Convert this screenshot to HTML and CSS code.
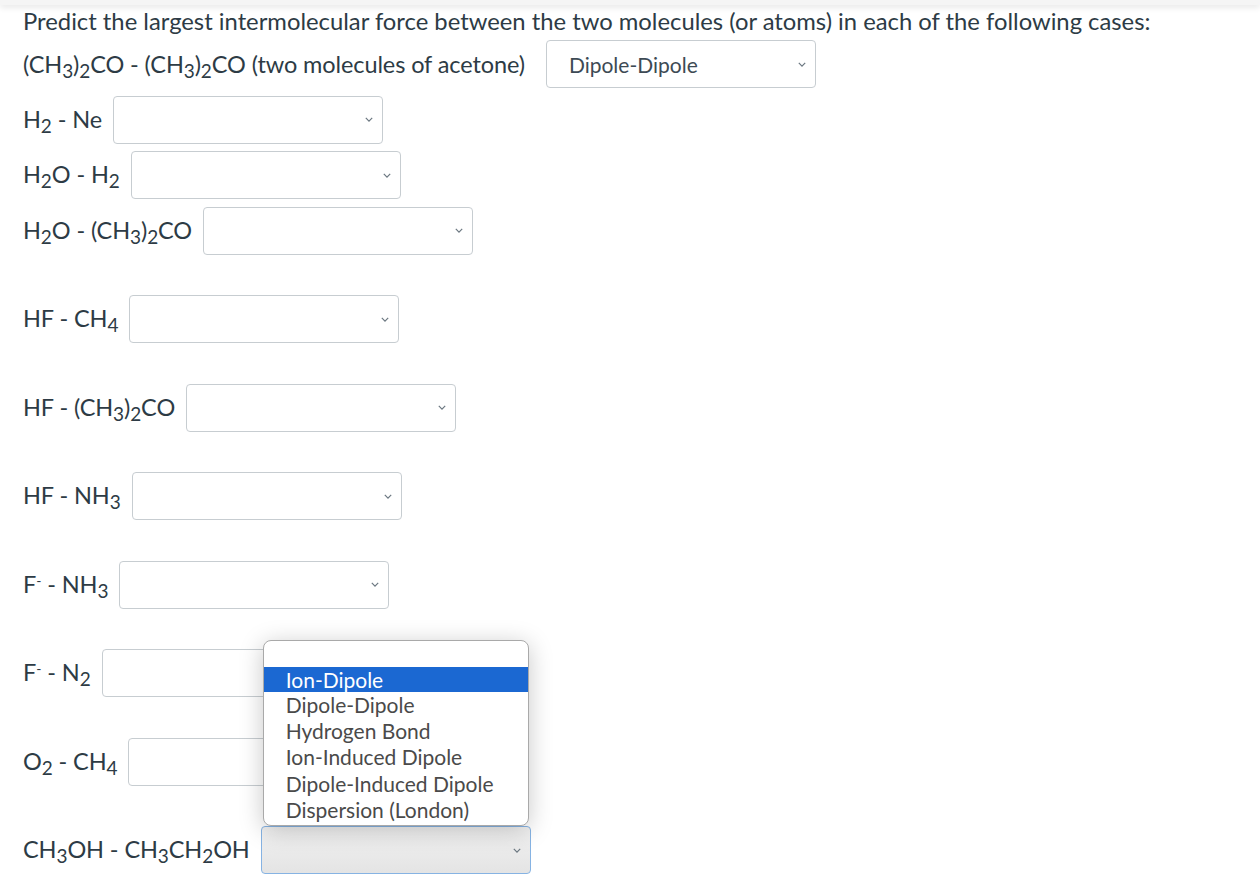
FILE: index.html
```html
<!DOCTYPE html>
<html>
<head>
<meta charset="utf-8">
<link rel="stylesheet" href="styles.css">
</head>
<body>
<div class="topbar"></div>
<div class="quiz">
  <p class="intro">Predict the largest intermolecular force between the two molecules (or atoms) in each of the following cases:</p>

  <div class="row first">
    <span class="label">(CH<sub>3</sub>)<sub>2</sub>CO - (CH<sub>3</sub>)<sub>2</sub>CO (two molecules of acetone)</span>
    <div class="select"><span class="value">Dipole-Dipole</span><svg class="chev" viewBox="0 0 10 6"><path d="M1 1 L5 5 L9 1" /></svg></div>
  </div>

  <div class="row">
    <span class="label">H<sub>2</sub> - Ne</span>
    <div class="select"><span class="value"></span><svg class="chev" viewBox="0 0 10 6"><path d="M1 1 L5 5 L9 1" /></svg></div>
  </div>

  <div class="row">
    <span class="label">H<sub>2</sub>O - H<sub>2</sub></span>
    <div class="select"><span class="value"></span><svg class="chev" viewBox="0 0 10 6"><path d="M1 1 L5 5 L9 1" /></svg></div>
  </div>

  <div class="row">
    <span class="label">H<sub>2</sub>O - (CH<sub>3</sub>)<sub>2</sub>CO</span>
    <div class="select"><span class="value"></span><svg class="chev" viewBox="0 0 10 6"><path d="M1 1 L5 5 L9 1" /></svg></div>
  </div>

  <div class="row spaced">
    <span class="label">HF - CH<sub>4</sub></span>
    <div class="select"><span class="value"></span><svg class="chev" viewBox="0 0 10 6"><path d="M1 1 L5 5 L9 1" /></svg></div>
  </div>

  <div class="row spaced">
    <span class="label">HF - (CH<sub>3</sub>)<sub>2</sub>CO</span>
    <div class="select"><span class="value"></span><svg class="chev" viewBox="0 0 10 6"><path d="M1 1 L5 5 L9 1" /></svg></div>
  </div>

  <div class="row spaced">
    <span class="label">HF - NH<sub>3</sub></span>
    <div class="select"><span class="value"></span><svg class="chev" viewBox="0 0 10 6"><path d="M1 1 L5 5 L9 1" /></svg></div>
  </div>

  <div class="row spaced">
    <span class="label">F<sup>-</sup> - NH<sub>3</sub></span>
    <div class="select"><span class="value"></span><svg class="chev" viewBox="0 0 10 6"><path d="M1 1 L5 5 L9 1" /></svg></div>
  </div>

  <div class="row spaced">
    <span class="label">F<sup>-</sup> - N<sub>2</sub></span>
    <div class="select"><span class="value"></span><svg class="chev" viewBox="0 0 10 6"><path d="M1 1 L5 5 L9 1" /></svg></div>
  </div>

  <div class="row spaced">
    <span class="label">O<sub>2</sub> - CH<sub>4</sub></span>
    <div class="select"><span class="value"></span><svg class="chev" viewBox="0 0 10 6"><path d="M1 1 L5 5 L9 1" /></svg></div>
  </div>

  <div class="row spaced">
    <span class="label">CH<sub>3</sub>OH - CH<sub>3</sub>CH<sub>2</sub>OH</span>
    <div class="select active"><span class="value"></span><svg class="chev" viewBox="0 0 10 6"><path d="M1 1 L5 5 L9 1" /></svg>
      <ul class="dropdown">
        <li class="opt blank"></li>
        <li class="opt hl">Ion-Dipole</li>
        <li class="opt">Dipole-Dipole</li>
        <li class="opt">Hydrogen Bond</li>
        <li class="opt">Ion-Induced Dipole</li>
        <li class="opt">Dipole-Induced Dipole</li>
        <li class="opt">Dispersion (London)</li>
      </ul>
    </div>
  </div>
</div>
</body>
</html>
```
FILE: styles.css
```css
html, body {
  margin: 0;
  padding: 0;
  background: #ffffff;
}
body {
  font-family: Lato, "Open Sans", sans-serif;
  color: #2d3b45;
  width: 1260px;
  height: 884px;
  overflow: hidden;
}
.topbar {
  height: 5px;
  background: #f5f5f5;
  box-shadow: 0 2px 6px rgba(0, 0, 0, 0.12);
  position: relative;
  z-index: 2;
}
.quiz {
  padding-left: 23px;
}
.intro {
  margin: 0;
  font-size: 23.8px;
  line-height: 32px;
  height: 35px;
}
.row {
  display: flex;
  align-items: center;
  height: 48px;
  margin-top: 7.5px;
}
.row.first {
  margin-top: 0;
}
.row.spaced {
  margin-top: 40.5px;
}
.label {
  font-size: 23.5px;
  line-height: 26px;
  white-space: nowrap;
  margin-right: 11px;
  letter-spacing: -0.1px;
}
.row.first .label {
  margin-right: 21px;
}
.row:not(.first) .label {
  margin-top: -2px;
}
.label sub {
  font-size: 19px;
  line-height: 0;
  vertical-align: -5px;
}
.label sup {
  font-size: 14px;
  line-height: 0;
  vertical-align: 7px;
}
.select {
  position: relative;
  box-sizing: border-box;
  width: 270px;
  height: 48px;
  border: 1px solid #c7cdd1;
  border-radius: 4px;
  background: #ffffff;
  display: flex;
  align-items: center;
  padding-left: 22px;
  padding-right: 9px;
}
.select .value {
  flex: 1;
  font-size: 21px;
  color: #3d4a54;
}
.chev {
  width: 8px;
  height: 5px;
  fill: none;
  stroke: #6b7780;
  stroke-width: 1.5;
}
.select.active {
  border-color: #86b3e3;
  background: linear-gradient(180deg, #f2f2f2 0%, #e4e4e4 100%);
}
.dropdown {
  position: absolute;
  left: 1px;
  bottom: calc(100% + 1px);
  width: 266px;
  box-sizing: border-box;
  margin: 0;
  padding: 2px 0 2px 0;
  list-style: none;
  background: #ffffff;
  border: 1px solid #a9a9a9;
  border-radius: 8px;
  box-shadow: 0 4px 24px rgba(0, 0, 0, 0.22);
  z-index: 5;
}
.opt {
  height: 26.2px;
  line-height: 26px;
  font-size: 21px;
  color: #4a4a4a;
  padding-left: 22px;
  white-space: nowrap;
}
.opt.blank {
  height: 24px;
}
.opt.hl {
  background: #1b68d2;
  color: #ffffff;
  height: 25px;
  line-height: 25px;
}
```
